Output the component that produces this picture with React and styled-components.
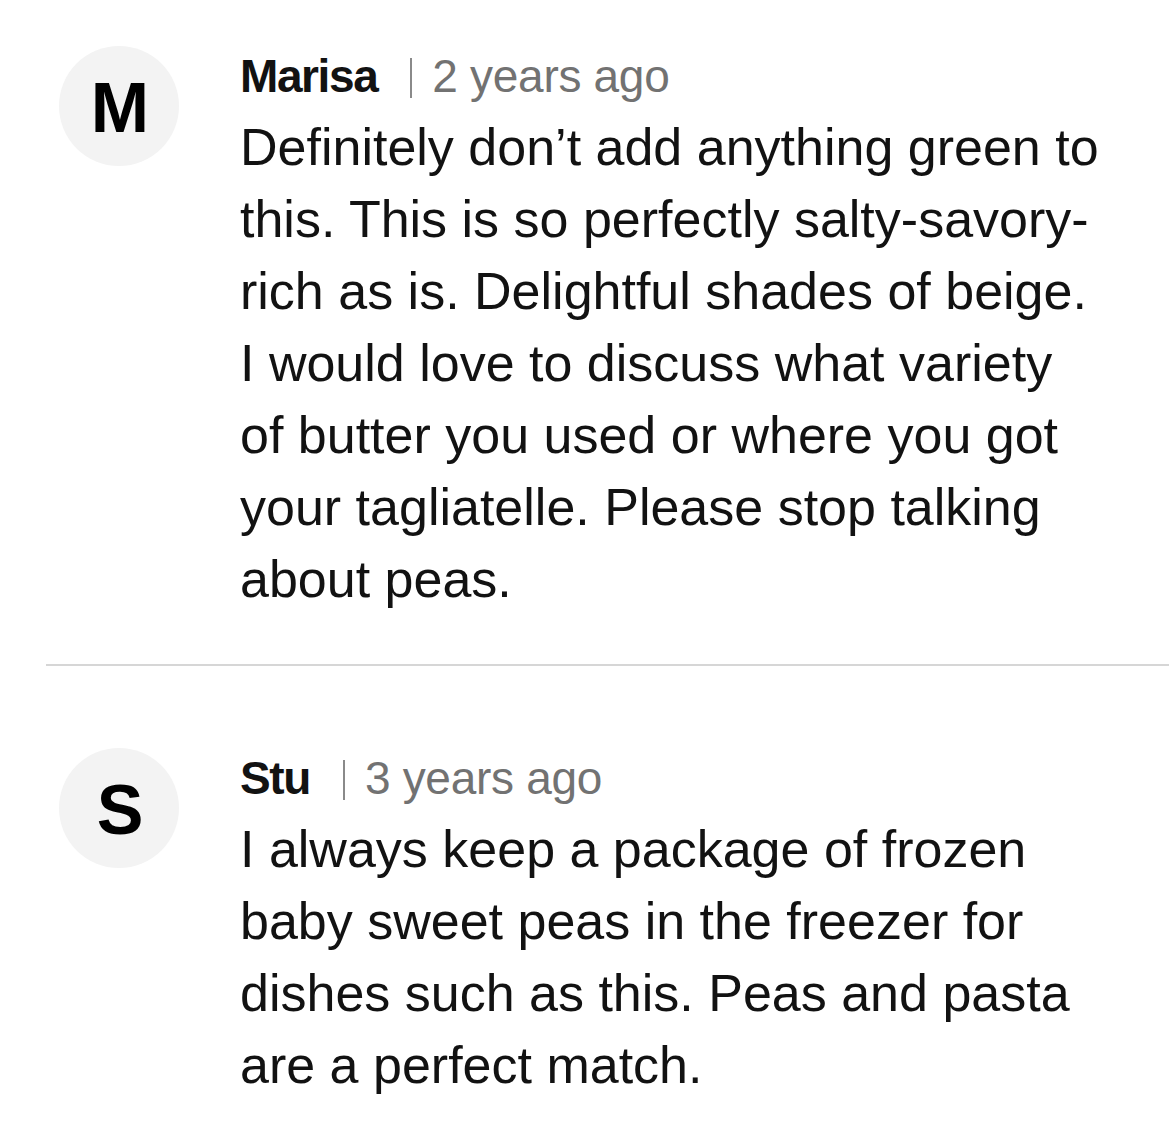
import React from "react";
import styled, { createGlobalStyle } from "styled-components";

const Global = createGlobalStyle`
  html, body { margin: 0; padding: 0; background: #fff; }
  body { font-family: "Liberation Sans", Arial, sans-serif; color: #121212; }
`;

const Page = styled.div`
  width: 1169px;
  padding-top: 41px;
`;

const Comment = styled.div`
  display: flex;
  gap: 61px;
  padding-left: 59px;
  padding-bottom: ${(p) => p.$pb}px;
`;

const Avatar = styled.div`
  flex: none;
  width: 120px;
  height: 120px;
  margin-top: 5px;
  border-radius: 50%;
  background: #f3f3f3;
  display: flex;
  align-items: center;
  justify-content: center;
  font-family: "Liberation Sans", Arial, sans-serif;
  font-weight: 700;
  font-size: 70px;
  letter-spacing: -2px;
  color: #000;
  padding-top: 4px;
  box-sizing: border-box;
`;

const Body = styled.div`
  flex: 1;
  min-width: 0;
`;

const Header = styled.div`
  display: flex;
  align-items: baseline;
  height: 70px;
  line-height: 70px;
  white-space: nowrap;
`;

const Name = styled.span`
  font-family: "Liberation Sans", Arial, sans-serif;
  font-weight: 700;
  font-size: 46px;
  letter-spacing: -1.4px;
  color: #121212;
  margin-right: 33px;
`;

const Meta = styled.span`
  font-family: "Liberation Sans", Arial, sans-serif;
  font-size: 46px;
  letter-spacing: -0.3px;
  color: #727272;
`;

const Bar = styled.span`
  display: inline-block;
  width: 2px;
  height: 40px;
  background: #8a8a8a;
  margin-right: 20px;
  vertical-align: -6px;
`;

const Text = styled.p`
  margin: 0;
  font-size: 52px;
  line-height: 72px;
  color: #121212;
`;

const Line = styled.span`
  display: block;
  white-space: nowrap;
`;

const Divider = styled.hr`
  margin: 0 0 77px 46px;
  border: none;
  border-top: 2px solid #d6d6d6;
`;

const comments = [
  {
    initial: "M",
    name: "Marisa",
    ago: "2 years ago",
    lines: [
      "Definitely don’t add anything green to",
      "this. This is so perfectly salty-savory-",
      "rich as is. Delightful shades of beige.",
      "I would love to discuss what variety",
      "of butter you used or where you got",
      "your tagliatelle. Please stop talking",
      "about peas.",
    ],
  },
  {
    initial: "S",
    name: "Stu",
    ago: "3 years ago",
    lines: [
      "I always keep a package of frozen",
      "baby sweet peas in the freezer for",
      "dishes such as this. Peas and pasta",
      "are a perfect match.",
    ],
  },
];

function CommentItem({ c, pb }) {
  return (
    <Comment $pb={pb}>
      <Avatar>{c.initial}</Avatar>
      <Body>
        <Header>
          <Name>{c.name}</Name>
          <Meta>
            <Bar />
            {c.ago}
          </Meta>
        </Header>
        <Text>
          {c.lines.map((l, i) => (
            <Line key={i}>{l}</Line>
          ))}
        </Text>
      </Body>
    </Comment>
  );
}

export default function App() {
  return (
    <Page>
      <Global />
      <CommentItem c={comments[0]} pb={49} />
      <Divider />
      <CommentItem c={comments[1]} pb={20} />
    </Page>
  );
}
